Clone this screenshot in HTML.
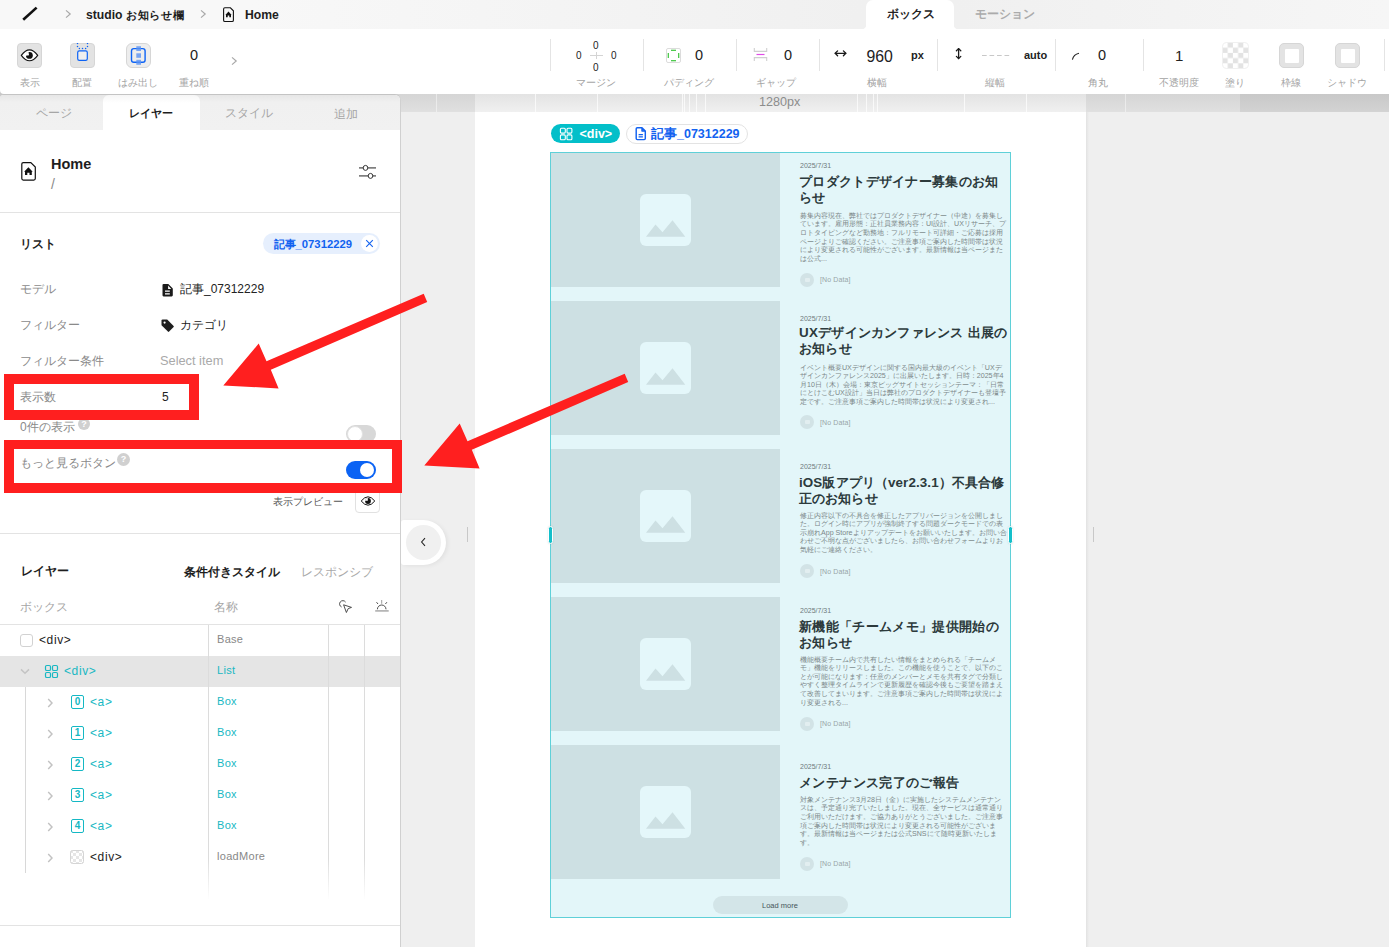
<!DOCTYPE html>
<html><head><meta charset="utf-8">
<style>
*{box-sizing:border-box;margin:0;padding:0}
html,body{width:1389px;height:947px;overflow:hidden;background:#efefef;font-family:"Liberation Sans",sans-serif;color:#222}
.a{position:absolute;white-space:nowrap}
.b{font-weight:bold}
.lbl{position:absolute;font-size:10px;color:#a3a3a3;top:75.5px;white-space:nowrap;transform:translateX(-50%);line-height:14px}
.num{position:absolute;font-size:14.5px;color:#222;white-space:nowrap;line-height:16px}
.sep{position:absolute;top:39px;width:1px;height:32px;background:#e4e4e4}
.ibox{position:absolute;top:43px;width:25px;height:25px;border-radius:4px;background:#e3e3e3;border:1px solid #d6d6d6}
.dt{font-size:7px;color:#6f7a7c;line-height:9px}
.tt{font-size:13.4px;font-weight:bold;color:#2c3a3c;line-height:16px;letter-spacing:0px}
.ds{font-size:7.1px;color:#7b8688;line-height:9px}
.nd{font-size:7px;color:#98a5a8;line-height:9px;letter-spacing:0.1px}
.pl{font-size:12px;color:#8a8a8a;line-height:14px}
.pv{font-size:12px;color:#222;line-height:14px}
.teal{color:#18b8c3}
.row{position:absolute;left:0;width:400px;height:31px}
.tr{position:absolute;font-size:12px;line-height:14px;letter-spacing:0.6px}
.tn{font-size:11px;letter-spacing:0.2px}
</style></head><body>

<!-- ===== top bar ===== -->
<div class="a" style="left:0;top:0;width:1389px;height:29px;background:linear-gradient(90deg,#f8f8f8 0px,#f8f8f8 250px,#f0f0f0 866px,#f0f0f0 954px,#f6f6f6 1389px)"></div>
<div class="a" style="left:859px;top:22px;width:8px;height:8px;background:#fff"></div>
<div class="a" style="left:853px;top:14px;width:14px;height:16px;background:#f0f0f0;border-radius:0 0 7px 0"></div>
<div class="a" style="left:953px;top:22px;width:8px;height:8px;background:#fff"></div>
<div class="a" style="left:953px;top:14px;width:14px;height:16px;background:#f0f0f0;border-radius:0 0 0 7px"></div>
<div class="a" style="left:866px;top:0;width:88px;height:30px;background:#fff;border-radius:7px 7px 0 0"></div>
<div class="a b" style="left:887px;top:6px;font-size:11.7px;line-height:15px;color:#222">ボックス</div>
<div class="a b" style="left:975px;top:6px;font-size:11.6px;line-height:15px;color:#ababab">モーション</div>

<svg class="a" style="left:20px;top:4px" width="20" height="20" viewBox="0 0 20 20"><path d="M3.2 15.8 L16.6 3.6" stroke="#111" stroke-width="2.6" stroke-linecap="butt"/></svg>
<svg class="a" style="left:63px;top:8px" width="10" height="12" viewBox="0 0 10 12"><path d="M3 2.4 L7.2 6 L3 9.6" stroke="#a8a8a8" stroke-width="1.2" fill="none"/></svg>
<div class="a b" style="left:86px;top:6.5px;font-size:12.2px;line-height:16px;color:#1e1e1e">studio <span style="font-size:11.3px;letter-spacing:0.7px">お知らせ欄</span></div>
<svg class="a" style="left:198px;top:8px" width="10" height="12" viewBox="0 0 10 12"><path d="M3 2.4 L7.2 6 L3 9.6" stroke="#a8a8a8" stroke-width="1.2" fill="none"/></svg>
<svg class="a" style="left:222.4px;top:6px" width="14" height="17" viewBox="0 0 14 17"><path d="M2.9 1.8 H8.4 L11.4 4.8 V14.2 Q11.4 15.5 10.1 15.5 H2.9 Q1.6 15.5 1.6 14.2 V3.1 Q1.6 1.8 2.9 1.8Z" stroke="#111" stroke-width="1.1" fill="none"/><path d="M3.4 8.9 L6.5 5.6 L9.6 8.9 H9 V11.3 H7.3 V9.6 H5.7 V11.3 H4 V8.9Z" fill="#111"/></svg>
<div class="a b" style="left:245px;top:6.5px;font-size:12.2px;line-height:16px;color:#1e1e1e">Home</div>

<!-- ===== toolbar ===== -->
<div class="a" style="left:0;top:86px;width:8px;height:14px;background:#c8c8c8"></div>
<div class="a" style="left:0;top:29px;width:1389px;height:65px;background:#fff;border-radius:0 0 0 4px"></div>
<div class="ibox" style="left:17px"></div>
<svg class="a" style="left:19px;top:46px" width="21" height="18" viewBox="0 0 21 18"><path d="M2.3 9.3 Q10.5 -1.6 18.7 9.3 Q10.5 20.2 2.3 9.3Z" stroke="#111" stroke-width="1.15" fill="#fff" stroke-linejoin="round"/><circle cx="10.4" cy="9.4" r="3.4" fill="#111"/><path d="M10.4 9.4 L7 9.4 A3.4 3.4 0 0 1 10.4 6Z" fill="#fff" transform="rotate(-10 10.4 9.4) translate(-0.3 -0.3) scale(1)"/></svg>
<div class="ibox" style="left:70px"></div>
<svg class="a" style="left:70px;top:43px" width="25" height="25" viewBox="0 0 25 25"><g fill="#0d63f5"><circle cx="7.5" cy="0.6" r="0.75"/><circle cx="7.5" cy="3.4" r="0.75"/><circle cx="9.4" cy="5.5" r="0.75"/><circle cx="12.5" cy="5.5" r="0.75"/><circle cx="15.6" cy="5.5" r="0.75"/><circle cx="17.5" cy="3.4" r="0.75"/><circle cx="17.5" cy="0.6" r="0.75"/></g><rect x="7.7" y="7.8" width="9.6" height="9.5" rx="1.6" stroke="#0d63f5" stroke-width="1.2" fill="#efefef"/></svg>
<div class="ibox" style="left:126px;background:#ededed;border-radius:6px"></div>
<svg class="a" style="left:126px;top:43px" width="25" height="25" viewBox="0 0 25 25"><rect x="5.5" y="5.6" width="13.6" height="13.7" rx="2.3" stroke="#0d63f5" stroke-width="1.4" fill="none"/><g fill="#5b93f3" opacity="0.8"><rect x="10.3" y="3.2" width="4.7" height="4.8"/><rect x="10.3" y="10.3" width="4.7" height="4.5"/><rect x="10.3" y="16.8" width="4.7" height="5"/></g></svg>
<div class="num" style="left:190px;top:47px">0</div>
<svg class="a" style="left:229px;top:54.5px" width="10" height="12" viewBox="0 0 10 12"><path d="M3 2.4 L7.2 6 L3 9.6" stroke="#a8a8a8" stroke-width="1.2" fill="none"/></svg>
<div class="lbl" style="left:30px">表示</div>
<div class="lbl" style="left:82px">配置</div>
<div class="lbl" style="left:138px">はみ出し</div>
<div class="lbl" style="left:194px">重ね順</div>

<div class="sep" style="left:550px"></div>
<div class="a" style="left:593px;top:40px;font-size:10px;line-height:11px">0</div>
<div class="a" style="left:576px;top:50px;font-size:10px;line-height:11px">0</div>
<div class="a" style="left:611px;top:50px;font-size:10px;line-height:11px">0</div>
<div class="a" style="left:593px;top:62px;font-size:10px;line-height:11px">0</div>
<div class="a" style="left:590px;top:55px;width:13px;height:1px;background:#d4d4d4"></div>
<div class="a" style="left:596px;top:52px;width:1px;height:7px;background:#d4d4d4"></div>
<div class="lbl" style="left:596px">マージン</div>

<div class="sep" style="left:643px"></div>
<svg class="a" style="left:666px;top:48px" width="15" height="15" viewBox="0 0 15 15"><rect x="0.5" y="0.5" width="14" height="14" rx="1.5" stroke="#dcdcdc" stroke-width="1" fill="#fff"/><g stroke="#3cc43c" stroke-width="1.2"><path d="M5 2.3 H10"/><path d="M5 12.7 H10"/><path d="M2.3 5 V10"/><path d="M12.7 5 V10"/></g></svg>
<div class="num" style="left:695px;top:47px">0</div>
<div class="lbl" style="left:689px">パディング</div>

<div class="sep" style="left:736px"></div>
<svg class="a" style="left:753px;top:47px" width="15" height="15" viewBox="0 0 15 15"><g stroke="#cfcfcf" stroke-width="1.1" fill="none"><path d="M1.3 1 V4.4 H13.7 V1"/><path d="M1.3 14 V10.6 H13.7 V14"/></g><path d="M3.5 7.5 H11.5" stroke="#e14be6" stroke-width="1.2"/></svg>
<div class="num" style="left:784px;top:47px">0</div>
<div class="lbl" style="left:776px">ギャップ</div>

<div class="sep" style="left:819px"></div>
<svg class="a" style="left:833px;top:48px" width="15" height="11" viewBox="0 0 15 11"><g stroke="#1a1a1a" stroke-width="1.3" fill="none" stroke-linecap="round" stroke-linejoin="round"><path d="M2.2 5.3 H12.8"/><path d="M4.6 2.9 L2.2 5.3 L4.6 7.7"/><path d="M10.4 2.9 L12.8 5.3 L10.4 7.7"/></g></svg>
<div class="num" style="left:866.5px;top:47.6px;font-size:15.8px;line-height:17px">960</div>
<div class="a b" style="left:911px;top:49px;font-size:11px;line-height:13px">px</div>
<div class="lbl" style="left:877px">横幅</div>

<div class="sep" style="left:937px"></div>
<svg class="a" style="left:953px;top:46px" width="11" height="15" viewBox="0 0 11 15"><g stroke="#1a1a1a" stroke-width="1.3" fill="none" stroke-linecap="round" stroke-linejoin="round"><path d="M5.6 2.6 V12.6"/><path d="M3.4 4.8 L5.6 2.6 L7.8 4.8"/><path d="M3.4 10.4 L5.6 12.6 L7.8 10.4"/></g></svg>
<div class="a" style="left:982px;top:54.8px;width:28px;height:1.4px;background-image:linear-gradient(90deg,#c8c8c8 5px,transparent 5px);background-size:7.5px 1.4px"></div>
<div class="a b" style="left:1024px;top:49px;font-size:11px;line-height:13px">auto</div>
<div class="lbl" style="left:995px">縦幅</div>

<div class="sep" style="left:1055px"></div>
<svg class="a" style="left:1070px;top:51px" width="12" height="11" viewBox="0 0 12 11"><path d="M2.4 8.6 Q3.6 3.6 9 2.3" stroke="#222" stroke-width="1.1" fill="none"/></svg>
<div class="num" style="left:1098px;top:47px">0</div>
<div class="lbl" style="left:1098px">角丸</div>

<div class="sep" style="left:1143px"></div>
<div class="num" style="left:1175px;top:47.5px;font-size:15px">1</div>
<div class="lbl" style="left:1179px">不透明度</div>
<svg class="a" style="left:1222px;top:42px" width="27" height="27" viewBox="0 0 27 27"><defs><pattern id="ck" width="10.4" height="10.4" x="0.5" y="0.5" patternUnits="userSpaceOnUse"><rect width="10.4" height="10.4" fill="#fff"/><rect x="5.2" width="5.2" height="5.2" fill="#e3e3e3"/><rect y="5.2" width="5.2" height="5.2" fill="#e3e3e3"/></pattern></defs><rect x="0.5" y="0.5" width="26" height="26" rx="4" fill="url(#ck)" stroke="#f0f0f0"/></svg>
<div class="lbl" style="left:1235px">塗り</div>
<div class="ibox" style="left:1279px;border-radius:5px"></div>
<div class="a" style="left:1284.5px;top:48.5px;width:14px;height:14px;background:#fff;border-radius:1px"></div>
<div class="lbl" style="left:1291px">枠線</div>
<div class="ibox" style="left:1335px;border-radius:5px"></div>
<div class="a" style="left:1340.5px;top:48.5px;width:14px;height:14px;background:#fff;border-radius:1px"></div>
<div class="lbl" style="left:1347px">シャドウ</div>
<div class="sep" style="left:1384px"></div>

<!-- ===== ruler ===== -->
<div class="a" style="left:390px;top:94px;width:999px;height:18px;background:linear-gradient(#d5d5d5,#e0e0e0)"></div>
<div class="a" style="left:475px;top:94px;width:611px;height:18px;background:linear-gradient(#e3e3e3,#f0f0f0)"></div>
<div class="a" style="left:1240px;top:94px;width:149px;height:18px;background:linear-gradient(#c8c8c8,#d3d3d3)"></div>
<div class="a" style="left:435.5px;top:94px;width:1.5px;height:18px;background:rgba(255,255,255,0.45)"></div>
<div class="a" style="left:1124.5px;top:94px;width:1.5px;height:18px;background:rgba(255,255,255,0.45)"></div>
<div class="a" style="left:535px;top:94px;width:1px;height:18px;background:rgba(255,255,255,0.7)"></div>
<div class="a" style="left:597px;top:94px;width:1px;height:18px;background:rgba(255,255,255,0.7)"></div>
<div class="a" style="left:681.5px;top:94px;width:1px;height:18px;background:rgba(255,255,255,0.7)"></div>
<div class="a" style="left:684px;top:94px;width:1px;height:18px;background:rgba(255,255,255,0.7)"></div>
<div class="a" style="left:688.5px;top:94px;width:1px;height:18px;background:rgba(255,255,255,0.7)"></div>
<div class="a" style="left:695.5px;top:94px;width:1px;height:18px;background:rgba(255,255,255,0.7)"></div>
<div class="a" style="left:705px;top:94px;width:1px;height:18px;background:rgba(255,255,255,0.7)"></div>
<div class="a" style="left:857px;top:94px;width:1px;height:18px;background:rgba(255,255,255,0.7)"></div>
<div class="a" style="left:866px;top:94px;width:1px;height:18px;background:rgba(255,255,255,0.7)"></div>
<div class="a" style="left:873px;top:94px;width:1px;height:18px;background:rgba(255,255,255,0.7)"></div>
<div class="a" style="left:877px;top:94px;width:1px;height:18px;background:rgba(255,255,255,0.7)"></div>
<div class="a" style="left:964px;top:94px;width:1px;height:18px;background:rgba(255,255,255,0.7)"></div>
<div class="a" style="left:1026px;top:94px;width:1px;height:18px;background:rgba(255,255,255,0.7)"></div>
<div class="a" style="left:759px;top:95px;font-size:12.6px;line-height:15px;color:#8c8c8c">1280px</div>

<!-- ===== canvas ===== -->
<div class="a" style="left:475px;top:112px;width:611px;height:835px;background:#fff"></div>
<div class="a" style="left:1086px;top:112px;width:3px;height:835px;background:linear-gradient(90deg,#e2e2e2,#efefef)"></div>
<div class="a" style="left:466.5px;top:527px;width:1.5px;height:15px;background:#c8c8c8"></div>
<div class="a" style="left:1092.5px;top:527px;width:1.5px;height:15px;background:#c8c8c8"></div>

<div class="a" style="left:550px;top:152px;width:461px;height:766px;background:#e3f6f9;border:1.2px solid #5fd0d8"></div>
<div class="a" style="left:551px;top:153px;width:229px;height:134px;background:#cde0e3"></div>
<svg class="a" style="left:640px;top:194px" width="51" height="52" viewBox="0 0 51 52"><rect x="0" y="0" width="51" height="52" rx="6" fill="#e4f7fa"/><path d="M6 42.7 L15.5 30.5 L22.5 38.3 L32.5 26.3 L45.3 42.7 Z" fill="#cde0e3"/></svg>
<div class="a dt" style="left:800px;top:160.5px">2025/7/31</div>
<div class="a tt" style="left:799px;top:174px;letter-spacing:0.31px">プロダクトデザイナー募集のお知</div>
<div class="a tt" style="left:799px;top:190px;letter-spacing:0.31px">らせ</div>
<div class="a ds" style="left:800px;top:211.8px">募集内容現在、弊社ではプロダクトデザイナー（中途）を募集し</div>
<div class="a ds" style="left:800px;top:220.4px">ています。雇用形態：正社員業務内容：UI設計、UXリサーチ、プ</div>
<div class="a ds" style="left:800px;top:229.0px">ロトタイピングなど勤務地：フルリモート可詳細・ご応募は採用</div>
<div class="a ds" style="left:800px;top:237.60000000000002px">ページよりご確認ください。ご注意事項ご案内した時間帯は状況</div>
<div class="a ds" style="left:800px;top:246.20000000000002px">により変更される可能性がございます。最新情報は当ページまた</div>
<div class="a ds" style="left:800px;top:254.8px">は公式...</div>
<div class="a" style="left:800px;top:272.5px;width:14px;height:14px;border-radius:50%;background:#d2e3e6"></div>
<div class="a" style="left:804.5px;top:277.5px;width:5px;height:4px;background:#e2eef0;border-radius:1px"></div>
<div class="a nd" style="left:820px;top:275.0px">[No Data]</div>
<div class="a" style="left:551px;top:301px;width:229px;height:134px;background:#cde0e3"></div>
<svg class="a" style="left:640px;top:342px" width="51" height="52" viewBox="0 0 51 52"><rect x="0" y="0" width="51" height="52" rx="6" fill="#e4f7fa"/><path d="M6 42.7 L15.5 30.5 L22.5 38.3 L32.5 26.3 L45.3 42.7 Z" fill="#cde0e3"/></svg>
<div class="a dt" style="left:800px;top:313.5px">2025/7/31</div>
<div class="a tt" style="left:799px;top:325px;letter-spacing:0.23px">UXデザインカンファレンス 出展の</div>
<div class="a tt" style="left:799px;top:341px;letter-spacing:0.23px">お知らせ</div>
<div class="a ds" style="left:800px;top:363.5px">イベント概要UXデザインに関する国内最大級のイベント「UXデ</div>
<div class="a ds" style="left:800px;top:372.1px">ザインカンファレンス2025」に出展いたします。日時：2025年4</div>
<div class="a ds" style="left:800px;top:380.7px">月10日（木）会場：東京ビッグサイトセッションテーマ：「日常</div>
<div class="a ds" style="left:800px;top:389.3px">にとけこむUX設計」当日は弊社のプロダクトデザイナーも登壇予</div>
<div class="a ds" style="left:800px;top:397.9px">定です。ご注意事項ご案内した時間帯は状況により変更され...</div>
<div class="a" style="left:800px;top:415px;width:14px;height:14px;border-radius:50%;background:#d2e3e6"></div>
<div class="a" style="left:804.5px;top:420px;width:5px;height:4px;background:#e2eef0;border-radius:1px"></div>
<div class="a nd" style="left:820px;top:417.5px">[No Data]</div>
<div class="a" style="left:551px;top:449px;width:229px;height:134px;background:#cde0e3"></div>
<svg class="a" style="left:640px;top:490px" width="51" height="52" viewBox="0 0 51 52"><rect x="0" y="0" width="51" height="52" rx="6" fill="#e4f7fa"/><path d="M6 42.7 L15.5 30.5 L22.5 38.3 L32.5 26.3 L45.3 42.7 Z" fill="#cde0e3"/></svg>
<div class="a dt" style="left:800px;top:461.5px">2025/7/31</div>
<div class="a tt" style="left:799px;top:475px;letter-spacing:0.11px">iOS版アプリ（ver2.3.1）不具合修</div>
<div class="a tt" style="left:799px;top:491px;letter-spacing:0.11px">正のお知らせ</div>
<div class="a ds" style="left:800px;top:511.5px">修正内容以下の不具合を修正したアプリバージョンを公開しまし</div>
<div class="a ds" style="left:800px;top:520.1px">た。ログイン時にアプリが強制終了する問題ダークモードでの表</div>
<div class="a ds" style="left:800px;top:528.7px">示崩れApp Storeよりアップデートをお願いいたします。お問い合</div>
<div class="a ds" style="left:800px;top:537.3px">わせご不明な点がございましたら、お問い合わせフォームよりお</div>
<div class="a ds" style="left:800px;top:545.9px">気軽にご連絡ください。</div>
<div class="a" style="left:800px;top:564px;width:14px;height:14px;border-radius:50%;background:#d2e3e6"></div>
<div class="a" style="left:804.5px;top:569px;width:5px;height:4px;background:#e2eef0;border-radius:1px"></div>
<div class="a nd" style="left:820px;top:566.5px">[No Data]</div>
<div class="a" style="left:551px;top:597px;width:229px;height:134px;background:#cde0e3"></div>
<svg class="a" style="left:640px;top:638px" width="51" height="52" viewBox="0 0 51 52"><rect x="0" y="0" width="51" height="52" rx="6" fill="#e4f7fa"/><path d="M6 42.7 L15.5 30.5 L22.5 38.3 L32.5 26.3 L45.3 42.7 Z" fill="#cde0e3"/></svg>
<div class="a dt" style="left:800px;top:606.0px">2025/7/31</div>
<div class="a tt" style="left:799px;top:618.6px;letter-spacing:0.34px">新機能「チームメモ」提供開始の</div>
<div class="a tt" style="left:799px;top:634.6px;letter-spacing:0.34px">お知らせ</div>
<div class="a ds" style="left:800px;top:655.5px">機能概要チーム内で共有したい情報をまとめられる「チームメ</div>
<div class="a ds" style="left:800px;top:664.1px">モ」機能をリリースしました。この機能を使うことで、以下のこ</div>
<div class="a ds" style="left:800px;top:672.7px">とが可能になります：任意のメンバーとメモを共有タグで分類し</div>
<div class="a ds" style="left:800px;top:681.3px">やすく整理タイムラインで更新履歴を確認今後もご要望を踏まえ</div>
<div class="a ds" style="left:800px;top:689.9px">て改善してまいります。ご注意事項ご案内した時間帯は状況によ</div>
<div class="a ds" style="left:800px;top:698.5px">り変更される...</div>
<div class="a" style="left:800px;top:716.8px;width:14px;height:14px;border-radius:50%;background:#d2e3e6"></div>
<div class="a" style="left:804.5px;top:721.8px;width:5px;height:4px;background:#e2eef0;border-radius:1px"></div>
<div class="a nd" style="left:820px;top:719.3px">[No Data]</div>
<div class="a" style="left:551px;top:745px;width:229px;height:134px;background:#cde0e3"></div>
<svg class="a" style="left:640px;top:786px" width="51" height="52" viewBox="0 0 51 52"><rect x="0" y="0" width="51" height="52" rx="6" fill="#e4f7fa"/><path d="M6 42.7 L15.5 30.5 L22.5 38.3 L32.5 26.3 L45.3 42.7 Z" fill="#cde0e3"/></svg>
<div class="a dt" style="left:800px;top:761.5px">2025/7/31</div>
<div class="a tt" style="left:799px;top:775px;letter-spacing:0.38px">メンテナンス完了のご報告</div>
<div class="a ds" style="left:800px;top:795.8px">対象メンテナンス3月28日（金）に実施したシステムメンテナン</div>
<div class="a ds" style="left:800px;top:804.4px">スは、予定通り完了いたしました。現在、全サービスは通常通り</div>
<div class="a ds" style="left:800px;top:813.0px">ご利用いただけます。ご協力ありがとうございました。ご注意事</div>
<div class="a ds" style="left:800px;top:821.5999999999999px">項ご案内した時間帯は状況により変更される可能性がございま</div>
<div class="a ds" style="left:800px;top:830.1999999999999px">す。最新情報は当ページまたは公式SNSにて随時更新いたしま</div>
<div class="a ds" style="left:800px;top:838.8px">す。</div>
<div class="a" style="left:800px;top:856.5px;width:14px;height:14px;border-radius:50%;background:#d2e3e6"></div>
<div class="a" style="left:804.5px;top:861.5px;width:5px;height:4px;background:#e2eef0;border-radius:1px"></div>
<div class="a nd" style="left:820px;top:859.0px">[No Data]</div>
<div class="a" style="left:713px;top:896px;width:135px;height:18px;border-radius:9px;background:#d3e5e8"></div>
<div class="a" style="left:762px;top:901px;font-size:7.5px;line-height:9px;color:#46555a">Load more</div>
<div class="a" style="left:548px;top:525.5px;width:5.2px;height:18px;border-radius:3px;background:#14bfca;border:1px solid #fff;box-shadow:0 0 2px rgba(0,0,0,0.12)"></div>
<div class="a" style="left:1008px;top:525.5px;width:5.2px;height:18px;border-radius:3px;background:#14bfca;border:1px solid #fff;box-shadow:0 0 2px rgba(0,0,0,0.12)"></div>

<div class="a b" style="left:551px;top:124px;width:69px;height:19px;border-radius:10px;background:#03bfc9"></div>
<svg class="a" style="left:559px;top:126.5px" width="15" height="14" viewBox="0 0 15 14"><g stroke="#fff" stroke-width="1.1" fill="none"><rect x="1.4" y="1.2" width="4.9" height="4.9" rx="1"/><rect x="8" y="1.2" width="4.9" height="4.9" rx="1"/><rect x="1.4" y="7.9" width="4.9" height="4.9" rx="1"/><rect x="8" y="7.9" width="4.9" height="4.9" rx="1"/></g></svg>
<div class="a b" style="left:579.5px;top:127px;font-size:12.5px;line-height:15px;color:#fff">&lt;div&gt;</div>
<div class="a" style="left:625.5px;top:123.5px;width:122px;height:20px;border-radius:10px;background:#fff;border:1px solid #e3e3e3"></div>
<svg class="a" style="left:635px;top:126px" width="12" height="15" viewBox="0 0 12 15"><path d="M2.3 1.7 H7 L10.3 5 V12.5 Q10.3 13.6 9.2 13.6 H2.3 Q1.2 13.6 1.2 12.5 V2.8 Q1.2 1.7 2.3 1.7Z M7 1.7 V5 H10.3" stroke="#1262f0" stroke-width="1.45" fill="none" stroke-linejoin="round"/><path d="M3.6 8.6 H7.9 M3.6 10.9 H7.9" stroke="#1262f0" stroke-width="1.1"/></svg>
<div class="a b" style="left:651px;top:126.5px;font-size:12.5px;line-height:15px;color:#1262f0">記事_07312229</div>

<!-- ===== left panel ===== -->
<div class="a" style="left:0;top:94px;width:401px;height:853px;background:#fff;border-top:1px solid #c4c4c4;border-right:1px solid #d0d0d0;border-radius:4px 6px 0 0"></div>
<div class="a" style="left:0;top:95px;width:400px;height:35px;background:linear-gradient(#e6e6e6,#f0f0f0 7px,#f1f1f1);border-radius:3px 5px 0 0"></div>
<div class="a" style="left:103px;top:95px;width:97px;height:35px;background:linear-gradient(#f6f6f6,#fff 8px);border-radius:6px 6px 0 0"></div>
<div class="a" style="left:36px;top:105.5px;font-size:11.5px;line-height:15px;color:#a6a6a6">ページ</div>
<div class="a b" style="left:129px;top:105.5px;font-size:11.2px;line-height:15px;color:#1e1e1e">レイヤー</div>
<div class="a" style="left:225px;top:105.5px;font-size:11.5px;line-height:15px;color:#a6a6a6">スタイル</div>
<div class="a" style="left:334px;top:105.5px;font-size:11.6px;line-height:15px;color:#a6a6a6">追加</div>

<svg class="a" style="left:19px;top:160px" width="18" height="24" viewBox="0 0 18 24"><path d="M4.3 2.6 H11.8 L16.3 7 V18.6 Q16.3 20.1 14.8 20.1 H4.3 Q2.8 20.1 2.8 18.6 V4.1 Q2.8 2.6 4.3 2.6Z" stroke="#111" stroke-width="1.2" fill="none"/><path d="M5.1 11.8 L9.4 7.3 L13.7 11.8 H12.8 V15.1 H10.5 V12.7 H8.3 V15.1 H6 V11.8Z" fill="#111"/></svg>
<div class="a b" style="left:51px;top:156px;font-size:14.5px;line-height:17px;color:#1e1e1e">Home</div>
<div class="a" style="left:51px;top:175.5px;font-size:14px;line-height:16px;color:#8a8a8a">/</div>
<svg class="a" style="left:357px;top:164px" width="20" height="16" viewBox="0 0 20 16"><g stroke="#555" stroke-width="1.3"><path d="M2 3.9 H19"/><path d="M2 11.9 H19"/></g><g stroke="#222" stroke-width="0.9" fill="#fff"><ellipse cx="8.5" cy="3.9" rx="2.3" ry="2.5"/><ellipse cx="13.5" cy="11.9" rx="2.3" ry="2.5"/></g></svg>
<div class="a" style="left:0;top:212px;width:400px;height:1px;background:#e3e3e3"></div>

<div class="a b" style="left:20px;top:236.5px;font-size:11.8px;line-height:15px;color:#1e1e1e">リスト</div>
<div class="a" style="left:263px;top:233px;width:117px;height:21px;border-radius:11px;background:#e6effd"></div>
<div class="a b" style="left:273.5px;top:236.5px;font-size:11.3px;line-height:14px;color:#1262f0">記事_07312229</div>
<div class="a" style="left:361px;top:235px;width:17px;height:17px;border-radius:50%;background:#fff"></div>
<svg class="a" style="left:364px;top:238px" width="11" height="11" viewBox="0 0 11 11"><path d="M2.2 2.2 L8.8 8.8 M8.8 2.2 L2.2 8.8" stroke="#1262f0" stroke-width="1.1"/></svg>

<div class="a pl" style="left:20px;top:282px">モデル</div>
<svg class="a" style="left:160px;top:282px" width="14" height="16" viewBox="0 0 14 16"><path d="M3.6 2 H8.3 L12.8 6.5 V13.3 Q12.8 14.4 11.7 14.4 H3.6 Q2.5 14.4 2.5 13.3 V3.1 Q2.5 2 3.6 2Z" fill="#1a1a1a"/><path d="M8.1 3.6 L11.2 6.9 H8.1Z" fill="#fff"/><path d="M5 9.1 H9.8 M5 11.8 H9.8" stroke="#fff" stroke-width="1.2"/></svg>
<div class="a pv" style="left:180px;top:282px">記事_07312229</div>
<div class="a pl" style="left:20px;top:318px">フィルター</div>
<svg class="a" style="left:160px;top:318px" width="15" height="15" viewBox="0 0 15 15"><path d="M1.5 2.6 Q1.5 1.5 2.6 1.5 H7.2 L13.6 7.9 Q14.2 8.5 13.6 9.1 L9.1 13.6 Q8.5 14.2 7.9 13.6 L1.5 7.2Z" fill="#1e1e1e"/><circle cx="4.6" cy="4.6" r="1.1" fill="#fff"/></svg>
<div class="a pv" style="left:180px;top:318px">カテゴリ</div>
<div class="a pl" style="left:20px;top:354px">フィルター条件</div>
<div class="a" style="left:160px;top:353.5px;font-size:12.8px;line-height:14px;color:#a9a9a9">Select item</div>

<div class="a pl" style="left:20px;top:390px">表示数</div>
<div class="a pv" style="left:162px;top:390px">5</div>
<div class="a pl" style="left:20px;top:420px">0件の表示</div>
<div class="a" style="left:78px;top:418px;width:12px;height:12px;border-radius:50%;background:#d0d0d0;color:#fff;font-size:9px;line-height:12px;text-align:center;font-weight:bold">?</div>
<div class="a" style="left:346px;top:425px;width:30px;height:18px;border-radius:9px;background:#d8d8d8"></div>
<div class="a" style="left:346.5px;top:426px;width:16px;height:16px;border-radius:50%;background:#fff;border:1px solid #e2e2e2"></div>
<div class="a pl" style="left:20px;top:456px">もっと見るボタン</div>
<div class="a" style="left:117px;top:453px;width:13px;height:13px;border-radius:50%;background:#d0d0d0;color:#fff;font-size:9px;line-height:13px;text-align:center;font-weight:bold">?</div>
<div class="a" style="left:346px;top:460.7px;width:30px;height:18.4px;border-radius:9.2px;background:#0b63f4"></div>
<div class="a" style="left:359.8px;top:462.7px;width:14.5px;height:14.5px;border-radius:50%;background:#fff"></div>

<div class="a" style="left:273px;top:494.5px;font-size:9.6px;line-height:13px;color:#555">表示プレビュー</div>
<div class="a" style="left:355px;top:488px;width:25px;height:25px;border-radius:4px;background:#fff;border:1px solid #e1e1e1"></div>
<svg class="a" style="left:359px;top:494px" width="17" height="14" viewBox="0 0 17 14"><path d="M2.2 7 Q9 -1.4 15.8 7 Q9 15.4 2.2 7Z" stroke="#111" stroke-width="1.0" fill="#fff" stroke-linejoin="round"/><circle cx="9" cy="7" r="2.9" fill="#111"/><path d="M9 7 L6.1 7 A2.9 2.9 0 0 1 9 4.1Z" fill="#fff" transform="translate(-0.2 -0.2)"/></svg>
<div class="a" style="left:0;top:533px;width:400px;height:1px;background:#e3e3e3"></div>

<div class="a b" style="left:20.5px;top:562.5px;font-size:11.7px;line-height:15px;color:#1e1e1e">レイヤー</div>
<div class="a b" style="left:184px;top:565px;font-size:12px;line-height:15px;color:#1e1e1e">条件付きスタイル</div>
<div class="a" style="left:301px;top:565px;font-size:12px;line-height:15px;color:#a9a9a9">レスポンシブ</div>
<div class="a" style="left:20px;top:600px;font-size:12px;line-height:14px;color:#a6a6a6">ボックス</div>
<div class="a" style="left:214px;top:600px;font-size:12px;line-height:14px;color:#a6a6a6">名称</div>
<svg class="a" style="left:338px;top:600px" width="16" height="16" viewBox="0 0 16 16"><path d="M5.6 4.8 L13.5 7.4 L10.2 8.6 L8.4 12.5 Z" stroke="#444" stroke-width="0.95" fill="none" stroke-linejoin="round"/><path d="M3.6 7 A3.3 3.3 0 1 1 7.6 2.1" stroke="#444" stroke-width="0.95" fill="none"/></svg>
<svg class="a" style="left:374px;top:599px" width="16" height="16" viewBox="0 0 16 16"><path d="M1.2 11.9 H14.7" stroke="#b3b3b3" stroke-width="1.7"/><g stroke="#444" stroke-width="0.95" fill="none"><path d="M3.4 10.3 A4.3 4.3 0 0 1 12 10.3"/><path d="M7.7 1 V4.8" stroke="#999"/><path d="M2.5 3.2 L4 5"/><path d="M12.9 3.2 L11.4 5"/></g></svg>
<div class="a" style="left:0;top:624px;width:400px;height:1px;background:#e3e3e3"></div>
<div class="a" style="left:0;top:656px;width:400px;height:31px;background:#e5e5e5"></div>
<div class="a" style="left:208px;top:625px;width:1px;height:275px;background:linear-gradient(#dcdcdc 85%,rgba(220,220,220,0))"></div>
<div class="a" style="left:328px;top:625px;width:1px;height:275px;background:linear-gradient(#dcdcdc 85%,rgba(220,220,220,0))"></div>
<div class="a" style="left:364px;top:625px;width:1px;height:275px;background:linear-gradient(#dcdcdc 85%,rgba(220,220,220,0))"></div>
<div class="a" style="left:25px;top:687px;width:1px;height:186px;background:#d8d8d8"></div>

<div class="a" style="left:20px;top:634px;width:13px;height:13px;border-radius:3px;border:1px solid #d2d2d2;background:#fff"></div>
<div class="tr" style="left:39px;top:633px;color:#222">&lt;div&gt;</div>
<div class="tr" style="left:217px;top:632px;color:#888;font-size:11px;letter-spacing:0.3px">Base</div>

<svg class="a" style="left:18px;top:665px" width="14" height="12" viewBox="0 0 14 12"><path d="M3 4.4 L7 8.2 L11 4.4" stroke="#c4c4c4" stroke-width="1.45" fill="none"/></svg>
<svg class="a" style="left:44px;top:664px" width="15" height="15" viewBox="0 0 15 15"><g stroke="#18b8c3" stroke-width="1.2" fill="none"><rect x="1.5" y="1.5" width="5" height="5" rx="1.3"/><rect x="8.5" y="1.5" width="5" height="5" rx="1.3"/><rect x="1.5" y="8.5" width="5" height="5" rx="1.3"/><rect x="8.5" y="8.5" width="5" height="5" rx="1.3"/></g></svg>
<div class="tr teal" style="left:64px;top:664px">&lt;div&gt;</div>
<div class="tr teal" style="left:217px;top:663px;font-size:11px;letter-spacing:0.3px">List</div>
<svg class="a" style="left:45px;top:696px" width="10" height="14" viewBox="0 0 10 14"><path d="M3.2 3 L7 7 L3.2 11" stroke="#c2c2c2" stroke-width="1.45" fill="none"/></svg>
<div class="a" style="left:71px;top:695px;width:13px;height:14px;border:1.2px solid #14b8c4;border-radius:2px;font-size:10px;line-height:11.5px;text-align:center;color:#14b8c4;font-weight:bold">0</div>
<div class="tr teal" style="left:90px;top:695px">&lt;a&gt;</div>
<div class="tr teal" style="left:217px;top:694px;font-size:11px;letter-spacing:0.3px">Box</div>
<svg class="a" style="left:45px;top:727px" width="10" height="14" viewBox="0 0 10 14"><path d="M3.2 3 L7 7 L3.2 11" stroke="#c2c2c2" stroke-width="1.45" fill="none"/></svg>
<div class="a" style="left:71px;top:726px;width:13px;height:14px;border:1.2px solid #14b8c4;border-radius:2px;font-size:10px;line-height:11.5px;text-align:center;color:#14b8c4;font-weight:bold">1</div>
<div class="tr teal" style="left:90px;top:726px">&lt;a&gt;</div>
<div class="tr teal" style="left:217px;top:725px;font-size:11px;letter-spacing:0.3px">Box</div>
<svg class="a" style="left:45px;top:758px" width="10" height="14" viewBox="0 0 10 14"><path d="M3.2 3 L7 7 L3.2 11" stroke="#c2c2c2" stroke-width="1.45" fill="none"/></svg>
<div class="a" style="left:71px;top:757px;width:13px;height:14px;border:1.2px solid #14b8c4;border-radius:2px;font-size:10px;line-height:11.5px;text-align:center;color:#14b8c4;font-weight:bold">2</div>
<div class="tr teal" style="left:90px;top:757px">&lt;a&gt;</div>
<div class="tr teal" style="left:217px;top:756px;font-size:11px;letter-spacing:0.3px">Box</div>
<svg class="a" style="left:45px;top:789px" width="10" height="14" viewBox="0 0 10 14"><path d="M3.2 3 L7 7 L3.2 11" stroke="#c2c2c2" stroke-width="1.45" fill="none"/></svg>
<div class="a" style="left:71px;top:788px;width:13px;height:14px;border:1.2px solid #14b8c4;border-radius:2px;font-size:10px;line-height:11.5px;text-align:center;color:#14b8c4;font-weight:bold">3</div>
<div class="tr teal" style="left:90px;top:788px">&lt;a&gt;</div>
<div class="tr teal" style="left:217px;top:787px;font-size:11px;letter-spacing:0.3px">Box</div>
<svg class="a" style="left:45px;top:820px" width="10" height="14" viewBox="0 0 10 14"><path d="M3.2 3 L7 7 L3.2 11" stroke="#c2c2c2" stroke-width="1.45" fill="none"/></svg>
<div class="a" style="left:71px;top:819px;width:13px;height:14px;border:1.2px solid #14b8c4;border-radius:2px;font-size:10px;line-height:11.5px;text-align:center;color:#14b8c4;font-weight:bold">4</div>
<div class="tr teal" style="left:90px;top:819px">&lt;a&gt;</div>
<div class="tr teal" style="left:217px;top:818px;font-size:11px;letter-spacing:0.3px">Box</div>
<svg class="a" style="left:45px;top:851px" width="10" height="14" viewBox="0 0 10 14"><path d="M3.2 3 L7 7 L3.2 11" stroke="#c2c2c2" stroke-width="1.45" fill="none"/></svg>
<svg class="a" style="left:70px;top:850px" width="14" height="14" viewBox="0 0 14 14"><defs><pattern id="ck2" width="6" height="6" patternUnits="userSpaceOnUse"><rect width="6" height="6" fill="#fff"/><rect width="3" height="3" fill="#e6e6e6"/><rect x="3" y="3" width="3" height="3" fill="#e6e6e6"/></pattern></defs><rect x="0.5" y="0.5" width="13" height="13" rx="2" fill="url(#ck2)" stroke="#d5d5d5"/></svg>
<div class="tr" style="left:90px;top:850px;color:#222">&lt;div&gt;</div>
<div class="tr" style="left:217px;top:849px;font-size:11px;color:#888;letter-spacing:0.3px">loadMore</div>

<div class="a" style="left:0;top:925px;width:400px;height:1px;background:#e3e3e3"></div>

<!-- collapse button -->
<div class="a" style="left:401px;top:519.5px;width:45px;height:45.5px;border-radius:3px 23px 23px 3px;background:#fff;box-shadow:2px 1px 4px rgba(0,0,0,0.06)"></div>
<div class="a" style="left:406px;top:524.6px;width:35px;height:35px;border-radius:50%;background:#f0f0f0"></div>
<svg class="a" style="left:417px;top:535px" width="12" height="14" viewBox="0 0 12 14"><path d="M8 3.2 L4.6 7 L8 10.8" stroke="#222" stroke-width="1.05" fill="none"/></svg>

<!-- ===== red boxes & arrows ===== -->
<div class="a" style="left:4px;top:374px;width:195px;height:45.5px;border:10px solid #ff1f1f"></div>
<div class="a" style="left:4px;top:440px;width:398px;height:52.6px;border:10px solid #ff1f1f;border-top-width:9.6px"></div>
<svg class="a" style="left:0;top:0" width="700" height="500" viewBox="0 0 700 500">
<path id="arr" d="M423.7 293.8 L427.2 302.1 L270.8 369.8 L278.6 388.5 L223.3 385.4 L258.7 343.6 L266.5 361.2 Z" fill="#ff1f1f"/>
<path d="M624.7 373.8 L628.2 382.1 L471.8 449.8 L479.6 468.5 L424.3 465.4 L459.7 423.6 L467.5 441.2 Z" fill="#ff1f1f"/>
</svg>

</body></html>
